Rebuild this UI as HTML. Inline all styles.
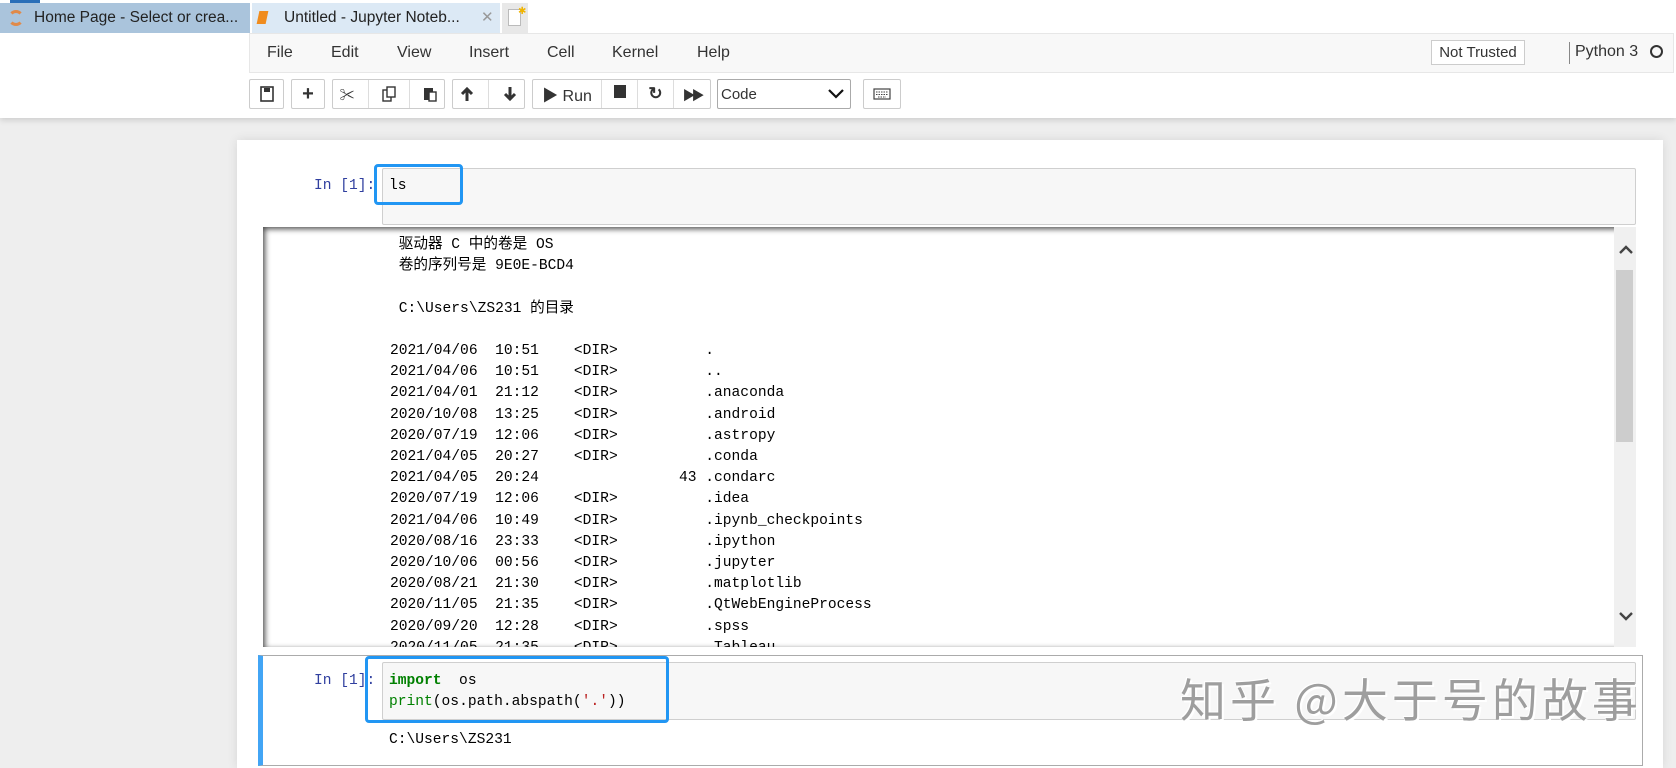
<!DOCTYPE html>
<html><head><meta charset="utf-8"><style>
*{box-sizing:border-box;margin:0;padding:0}
body{width:1676px;height:768px;overflow:hidden;background:#eeeeee;font-family:"Liberation Sans","Noto Sans CJK SC",sans-serif;position:relative}
.abs{position:absolute}
.mono{font-family:"Liberation Mono","Noto Sans CJK SC",monospace}
.btn{position:absolute;top:79px;height:30px;border:1px solid #ccc;border-radius:2px;background:#fff;display:flex;align-items:center;justify-content:center;color:#333;font-size:15px}
.sep{border-left:1px solid #ddd;height:28px}
.menu span{position:absolute;top:44px;font-size:16px;color:#333}
pre{font-family:"Liberation Mono","Noto Sans CJK SC",monospace;font-size:14.6px;line-height:21.2px;color:#000}
</style></head><body>
<div class="abs" style="left:0;top:0;width:1676px;height:118px;background:#fff;box-shadow:0 2px 6px rgba(0,0,0,.15)"></div>
<div class="abs" style="left:10px;top:0;width:30px;height:3px;background:#2a6fb8"></div>
<div class="abs" style="left:0;top:3px;width:250px;height:30px;background:#aac4dc;font-size:15.5px;color:#222;line-height:30px;padding-left:34px">Home Page - Select or crea...</div>
<div class="abs" style="left:8px;top:10px;width:16px;height:16px;border-radius:50%;border:3px solid #e08a4a;border-left-color:transparent;border-right-color:transparent"></div>
<div class="abs" style="left:252px;top:3px;width:248px;height:30px;background:#dce9f5;font-size:15.5px;color:#222;line-height:30px;padding-left:32px">Untitled - Jupyter Noteb...</div>
<div class="abs" style="left:258px;top:11px;width:9px;height:13px;background:#f08c1e;transform:skewX(-12deg)"></div>
<div class="abs" style="left:481px;top:8px;color:#999;font-size:15px">✕</div>
<div class="abs" style="left:502px;top:3px;width:26px;height:30px;background:#e8e8e8"></div>
<div class="abs" style="left:508px;top:9px;width:13px;height:17px;background:#fff;border:1px solid #bbb"></div>
<div class="abs" style="left:518px;top:6px;color:#f0b400;font-size:10px">✱</div>

<div class="abs" style="left:249px;top:33px;width:1425px;height:40px;background:#f8f8f8;border:1px solid #e7e7e7"></div>
<div class="menu"><span style="left:267px">File</span><span style="left:331px">Edit</span><span style="left:397px">View</span><span style="left:469px">Insert</span><span style="left:547px">Cell</span><span style="left:612px">Kernel</span><span style="left:697px">Help</span></div>
<div class="abs" style="left:1431px;top:40px;width:94px;height:25px;border:1px solid #ccc;background:#fff;font-size:15px;color:#333;text-align:center;line-height:23px">Not Trusted</div>
<div class="abs" style="left:1569px;top:42px;height:22px;border-left:1px solid #888"></div>
<div class="abs" style="left:1575px;top:43px;font-size:16px;color:#333">Python 3</div>
<div class="abs" style="left:1650px;top:45px;width:13px;height:13px;border:2px solid #333;border-radius:50%"></div>

<div class="btn" style="left:249px;width:35px"><svg width="14" height="16"><rect x="1" y="1" width="12" height="14" fill="none" stroke="#333" stroke-width="1.6"/><rect x="4" y="2" width="6" height="4" fill="#333"/></svg></div>
<div class="btn" style="left:291px;width:34px;font-weight:bold;font-size:20px">+</div>
<div class="btn" style="left:332px;width:113px;justify-content:space-around"><span>✂</span><span class="sep"></span><svg width="14" height="16"><rect x="1" y="4" width="8" height="11" fill="#fff" stroke="#333" stroke-width="1.4"/><rect x="5" y="1" width="8" height="10" fill="#fff" stroke="#333" stroke-width="1.4"/></svg><span class="sep"></span><svg width="14" height="16"><rect x="1" y="2" width="9" height="12" fill="#333"/><rect x="6" y="6" width="7" height="9" fill="#fff" stroke="#333" stroke-width="1.4"/></svg></div>
<div class="btn" style="left:452px;width:73px;justify-content:space-around"><svg width="14" height="16"><path d="M7 15V3M2 8l5-5 5 5" fill="none" stroke="#333" stroke-width="3"/></svg><span class="sep"></span><svg width="14" height="16"><path d="M7 1v12M2 8l5 5 5-5" fill="none" stroke="#333" stroke-width="3"/></svg></div>
<div class="btn" style="left:532px;width:179px;justify-content:flex-start;font-size:16px">
<span style="width:68px;text-align:center">▶ Run</span><span class="sep"></span><span style="width:35px;text-align:center"><span style="display:inline-block;width:12px;height:13px;background:#333"></span></span><span class="sep"></span><span style="width:35px;text-align:center;font-weight:bold;font-size:17px">↻</span><span class="sep"></span><span style="width:35px;text-align:center;font-size:13px;letter-spacing:-4px">▶▶</span></div>
<div class="btn" style="left:717px;width:134px;justify-content:space-between;padding:0 6px 0 3px;font-size:15px;border-color:#aaa"><span>Code</span><svg width="16" height="10"><path d="M1 1l7 7 7-7" fill="none" stroke="#111" stroke-width="2.2"/></svg></div>
<div class="btn" style="left:863px;width:38px"><svg width="18" height="12"><rect x="1" y="1" width="16" height="10" fill="none" stroke="#444" stroke-width="1.2"/><path d="M3 4h12M3 6.5h12M5 9h8" stroke="#444" stroke-dasharray="1.5 1"/></svg></div>

<div class="abs" style="left:237px;top:140px;width:1426px;height:628px;background:#fff;box-shadow:0 0 10px rgba(0,0,0,.1)"></div>
<div class="abs mono" style="left:314px;top:178px;font-size:14.6px;color:#303f9f">In [1]:</div>
<div class="abs" style="left:382px;top:168px;width:1254px;height:57px;background:#f7f7f7;border:1px solid #cfcfcf;border-radius:2px"></div>
<div class="abs mono" style="left:389px;top:178px;font-size:14.6px">ls</div>
<div class="abs" style="left:374px;top:164px;width:89px;height:41px;border:3px solid #2196f3;border-radius:4px"></div>

<div class="abs" style="left:263px;top:227px;width:1373px;height:420px;background:#fff;box-shadow:inset 2px 2px 6px rgba(0,0,0,.7);overflow:hidden">
<pre style="position:absolute;left:127px;top:8px"> 驱动器 C 中的卷是 OS
 卷的序列号是 9E0E-BCD4

 C:\Users\ZS231 的目录

2021/04/06  10:51    &lt;DIR&gt;          .
2021/04/06  10:51    &lt;DIR&gt;          ..
2021/04/01  21:12    &lt;DIR&gt;          .anaconda
2020/10/08  13:25    &lt;DIR&gt;          .android
2020/07/19  12:06    &lt;DIR&gt;          .astropy
2021/04/05  20:27    &lt;DIR&gt;          .conda
2021/04/05  20:24                43 .condarc
2020/07/19  12:06    &lt;DIR&gt;          .idea
2021/04/06  10:49    &lt;DIR&gt;          .ipynb_checkpoints
2020/08/16  23:33    &lt;DIR&gt;          .ipython
2020/10/06  00:56    &lt;DIR&gt;          .jupyter
2020/08/21  21:30    &lt;DIR&gt;          .matplotlib
2020/11/05  21:35    &lt;DIR&gt;          .QtWebEngineProcess
2020/09/20  12:28    &lt;DIR&gt;          .spss
2020/11/05  21:35    &lt;DIR&gt;          .Tableau</pre>
<div class="abs" style="left:1351px;top:0;width:22px;height:420px;background:#f0f0f0"></div>
<div class="abs" style="left:1353px;top:43px;width:17px;height:172px;background:#cdcdcd"></div>
<svg class="abs" style="left:1355px;top:16px" width="16" height="12"><path d="M2 10l6-6 6 6" fill="none" stroke="#444" stroke-width="2.4"/></svg>
<svg class="abs" style="left:1355px;top:384px" width="16" height="12"><path d="M2 2l6 6 6-6" fill="none" stroke="#444" stroke-width="2.4"/></svg>
</div>

<div class="abs" style="left:258px;top:655px;width:1385px;height:111px;border:1px solid #ababab;border-left:5px solid #42a5f5"></div>
<div class="abs mono" style="left:314px;top:673px;font-size:14.6px;color:#303f9f">In [1]:</div>
<div class="abs" style="left:382px;top:662px;width:1254px;height:58px;background:#f7f7f7;border:1px solid #cfcfcf;border-radius:2px"></div>
<pre class="abs" style="left:389px;top:671px"><b style="color:#008000">import</b>  os
<span style="color:#008000">print</span>(os.path.abspath(<span style="color:#ba2121">'.'</span>))</pre>
<div class="abs" style="left:365px;top:656px;width:304px;height:67px;border:3px solid #2196f3;border-radius:4px"></div>
<pre class="abs" style="left:389px;top:730px">C:\Users\ZS231</pre>

<div class="abs" style="left:1180px;top:672px;font-size:46px;line-height:52px;color:#9e9e9e;text-shadow:2px 2px 0 #fff,-1px -1px 0 #fff;font-family:'Noto Sans CJK SC',sans-serif;white-space:nowrap;letter-spacing:4px">知乎 @大于号的故事</div>
</body></html>
